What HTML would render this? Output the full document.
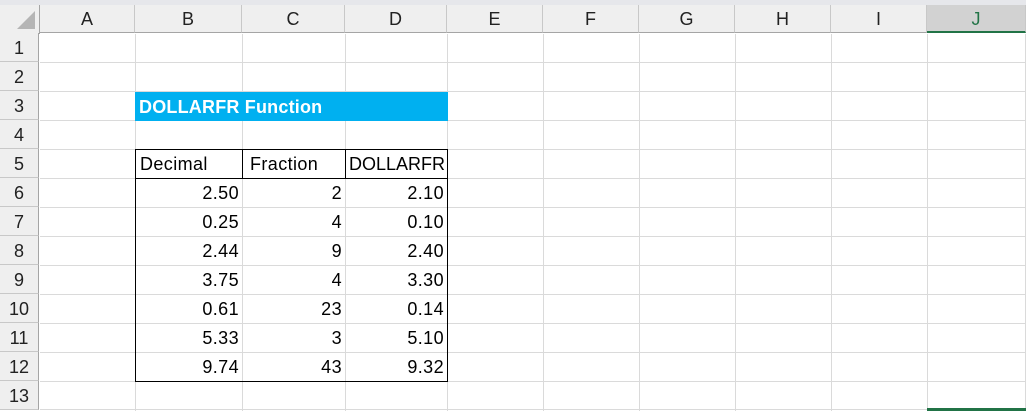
<!DOCTYPE html><html><head><style>
body{margin:0;width:1026px;height:411px;overflow:hidden;background:#fff;font-family:"Liberation Sans",Arial,sans-serif;position:relative}
div{position:absolute;box-sizing:border-box}
.v{top:34px;height:377px;width:1px;background:#dadada}
.h{left:40px;width:986px;height:1px;background:#dadada}
.ch{top:5px;height:28px;background:#efefef;border-right:1px solid #c8c8c8;border-bottom:1px solid #a5a5a5;text-align:center;line-height:29px;font-size:18px;color:#222}
.rh{left:0;width:39px;height:29px;background:#efefef;border-bottom:1px solid #c8c8c8;border-right:1px solid #a5a5a5;text-align:center;line-height:30px;font-size:18px;color:#222}
.c{height:29px;line-height:30px;font-size:18px;letter-spacing:0.4px;color:#000;padding:0 3px 0 4px;white-space:nowrap}
.r{text-align:right}
</style></head><body>
<div style="left:0;top:0;width:1026px;height:5px;background:#e6e7eb"></div>
<div style="left:0;top:5px;width:40px;height:29px;background:#efefef;border-right:1px solid #a5a5a5;border-bottom:1px solid #a5a5a5"></div>
<svg style="position:absolute;left:14px;top:10px" width="22" height="20"><polygon points="21,1 21,19 3,19" fill="#b5b5b5"/></svg>
<div class="ch" style="left:40px;width:95px">A</div>
<div class="ch" style="left:135px;width:107px">B</div>
<div class="ch" style="left:242px;width:103px">C</div>
<div class="ch" style="left:345px;width:102px">D</div>
<div class="ch" style="left:447px;width:96px">E</div>
<div class="ch" style="left:543px;width:96px">F</div>
<div class="ch" style="left:639px;width:96px">G</div>
<div class="ch" style="left:735px;width:96px">H</div>
<div class="ch" style="left:831px;width:96px">I</div>
<div class="ch" style="left:927px;width:99px;background:#d2d2d2;border-bottom:2px solid #217346;color:#217346">J</div>
<div class="rh" style="top:33px">1</div><div class="rh" style="top:62px">2</div><div class="rh" style="top:91px">3</div><div class="rh" style="top:120px">4</div><div class="rh" style="top:149px">5</div><div class="rh" style="top:178px">6</div><div class="rh" style="top:207px">7</div><div class="rh" style="top:236px">8</div><div class="rh" style="top:265px">9</div><div class="rh" style="top:294px">10</div><div class="rh" style="top:323px">11</div><div class="rh" style="top:352px">12</div><div class="rh" style="top:381px">13</div>
<div class="v" style="left:135px"></div><div class="v" style="left:242px"></div><div class="v" style="left:345px"></div><div class="v" style="left:447px"></div><div class="v" style="left:543px"></div><div class="v" style="left:639px"></div><div class="v" style="left:735px"></div><div class="v" style="left:831px"></div><div class="v" style="left:927px"></div><div class="v" style="left:1025px"></div>
<div class="h" style="top:62px"></div><div class="h" style="top:91px"></div><div class="h" style="top:120px"></div><div class="h" style="top:149px"></div><div class="h" style="top:178px"></div><div class="h" style="top:207px"></div><div class="h" style="top:236px"></div><div class="h" style="top:265px"></div><div class="h" style="top:294px"></div><div class="h" style="top:323px"></div><div class="h" style="top:352px"></div><div class="h" style="top:381px"></div><div class="h" style="top:409px"></div>
<div style="left:927px;top:408px;width:99px;height:3px;background:#217346"></div>
<div class="c" style="left:135px;top:92px;width:313px;height:29px;background:#00b0f0;color:#fff;font-weight:bold;letter-spacing:0.2px">DOLLARFR Function</div>
<div style="left:135px;top:149px;width:313px;height:233px;border:1px solid #000"></div>
<div style="left:136px;top:178px;width:311px;height:1px;background:#000"></div>
<div style="left:242px;top:149px;width:1px;height:29px;background:#000"></div>
<div style="left:345px;top:149px;width:1px;height:29px;background:#000"></div>
<div class="c" style="left:136px;top:149px">Decimal</div>
<div class="c" style="left:246px;top:149px">Fraction</div>
<div class="c" style="left:345px;top:149px;letter-spacing:0">DOLLARFR</div>
<div class="c r" style="left:135px;top:178px;width:107px">2.50</div><div class="c r" style="left:242px;top:178px;width:103px">2</div><div class="c r" style="left:345px;top:178px;width:102px">2.10</div>
<div class="c r" style="left:135px;top:207px;width:107px">0.25</div><div class="c r" style="left:242px;top:207px;width:103px">4</div><div class="c r" style="left:345px;top:207px;width:102px">0.10</div>
<div class="c r" style="left:135px;top:236px;width:107px">2.44</div><div class="c r" style="left:242px;top:236px;width:103px">9</div><div class="c r" style="left:345px;top:236px;width:102px">2.40</div>
<div class="c r" style="left:135px;top:265px;width:107px">3.75</div><div class="c r" style="left:242px;top:265px;width:103px">4</div><div class="c r" style="left:345px;top:265px;width:102px">3.30</div>
<div class="c r" style="left:135px;top:294px;width:107px">0.61</div><div class="c r" style="left:242px;top:294px;width:103px">23</div><div class="c r" style="left:345px;top:294px;width:102px">0.14</div>
<div class="c r" style="left:135px;top:323px;width:107px">5.33</div><div class="c r" style="left:242px;top:323px;width:103px">3</div><div class="c r" style="left:345px;top:323px;width:102px">5.10</div>
<div class="c r" style="left:135px;top:352px;width:107px">9.74</div><div class="c r" style="left:242px;top:352px;width:103px">43</div><div class="c r" style="left:345px;top:352px;width:102px">9.32</div>
</body></html>
